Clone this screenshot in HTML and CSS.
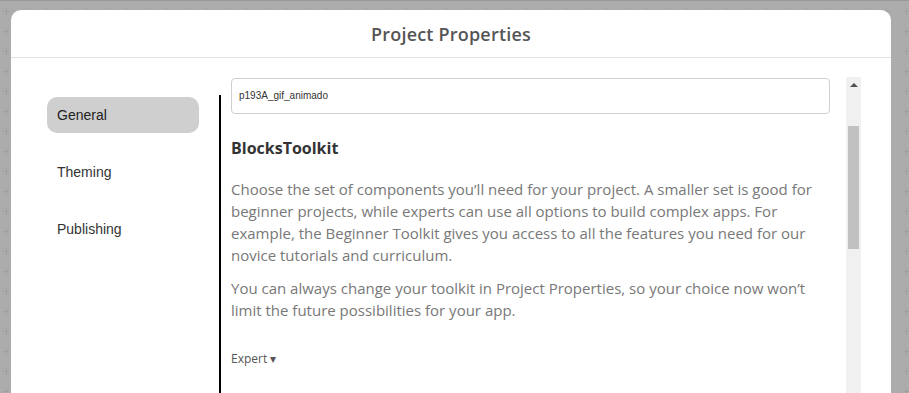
FILE: index.html
```html
<!DOCTYPE html>
<html lang="en">
<head>
<meta charset="utf-8">
<title>Project Properties</title>
<link rel="stylesheet" href="styles.css">
</head>
<body>
<div class="backdrop">
  <div class="modal">
    <div class="modal-header">
      <h1 class="modal-title">Project Properties</h1>
    </div>
    <div class="modal-body">
      <nav class="sidebar">
        <div class="nav-item active">General</div>
        <div class="nav-item">Theming</div>
        <div class="nav-item">Publishing</div>
      </nav>
      <div class="content">
        <div class="text-input">p193A_gif_animado</div>
        <h2 class="section-title">BlocksToolkit</h2>
        <p class="para first">Choose the set of components you’ll need for your project. A smaller set is good for beginner projects, while experts can use all options to build complex apps. For example, the Beginner Toolkit gives you access to all the features you need for our novice tutorials and curriculum.</p>
        <p class="para">You can always change your toolkit in Project Properties, so your choice now won’t limit the future possibilities for your app.</p>
        <div class="dropdown">Expert <span class="caret">▾</span></div>
      </div>
      <div class="scrollbar">
        <div class="scroll-arrow"></div>
        <div class="scroll-thumb"></div>
      </div>
    </div>
  </div>
</div>
</body>
</html>
```
FILE: styles.css
```css
html, body {
  margin: 0;
  padding: 0;
  height: 100%;
  overflow: hidden;
}
body {
  background-color: #acacac;
  background-image: url("data:image/svg+xml;utf8,<svg xmlns='http://www.w3.org/2000/svg' width='20' height='20'><path d='M3 11.5h6M6.5 8v7' stroke='%23a0a0a0' stroke-width='1'/></svg>");
  background-position: 0 0;
  border-top: 1px solid #9a9a9a;
  box-sizing: border-box;
}
.backdrop {
  padding: 9px 18px 0 11px;
}
.modal {
  background: #fff;
  border-radius: 10px 10px 0 0;
  height: 400px;
  display: flex;
  flex-direction: column;
}
.modal-header {
  height: 47px;
  border-bottom: 1px solid #e2e2e2;
  display: flex;
  align-items: center;
  justify-content: center;
}
.modal-title {
  margin: 0;
  font-family: "Open Sans", sans-serif;
  font-weight: 600;
  font-size: 18px;
  letter-spacing: 0.2px;
  color: #555;
  line-height: 24px;
}
.modal-body {
  display: flex;
  align-items: flex-start;
}
.sidebar {
  width: 172px;
  margin-top: 37px;
  padding: 2px 0 0 36px;
  border-right: 2px solid #000;
  height: 300px;
  display: flex;
  flex-direction: column;
  gap: 21px;
}
.nav-item {
  width: 142px;
  height: 36px;
  padding-left: 10px;
  border-radius: 10px;
  font-family: "Liberation Sans", Arial, sans-serif;
  font-size: 14px;
  color: #333;
  line-height: 36px;
}
.nav-item.active {
  background: #cfcfcf;
  color: #222;
}
.content {
  width: 599px;
  margin-top: 19px;
  padding: 1px 0 0 10px;
  font-family: "Open Sans", sans-serif;
}
.text-input {
  height: 34px;
  border: 1px solid #cfcfcf;
  border-radius: 4px;
  padding-left: 7px;
  font-family: "Liberation Sans", Arial, sans-serif;
  font-size: 10px;
  color: #333;
  line-height: 34px;
}
.section-title {
  margin: 22px 0 0;
  font-size: 16px;
  font-weight: 700;
  line-height: 24px;
  color: #333;
}
.para {
  margin: 11px 0 0;
  font-size: 15px;
  line-height: 22px;
  color: #787878;
}
.para.first {
  margin-top: 18px;
}
.dropdown {
  margin-top: 29px;
  font-size: 12px;
  line-height: 18px;
  color: #555;
}
.caret {
  font-size: 12px;
}
.scrollbar {
  width: 15px;
  height: 330px;
  margin: 19px 0 0 16px;
  background: #f0f0f0;
  display: flex;
  flex-direction: column;
  align-items: center;
}
.scroll-arrow {
  margin-top: 6px;
  width: 0;
  height: 0;
  border-left: 4px solid transparent;
  border-right: 4px solid transparent;
  border-bottom: 4px solid #505050;
}
.scroll-thumb {
  margin-top: 39px;
  width: 11px;
  height: 123px;
  background: #c1c1c1;
}
```
